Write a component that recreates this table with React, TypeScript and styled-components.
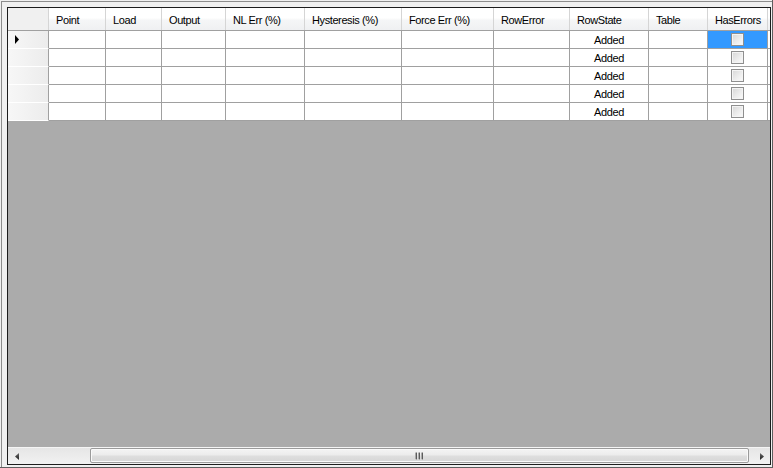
import React, { FC } from "react";
import styled, { createGlobalStyle } from "styled-components";

type Column = {
  title: string;
  width: number;
  align?: "left" | "center";
};

const columns: Column[] = [
  { title: "Point", width: 57 },
  { title: "Load", width: 56 },
  { title: "Output", width: 64 },
  { title: "NL Err (%)", width: 79 },
  { title: "Hysteresis (%)", width: 97 },
  { title: "Force Err (%)", width: 92 },
  { title: "RowError", width: 76 },
  { title: "RowState", width: 79, align: "center" },
  { title: "Table", width: 59 },
  { title: "HasErrors", width: 60, align: "center" },
  { title: "", width: 100 },
];

const ROW_HEADER_WIDTH = 41;
const template = [ROW_HEADER_WIDTH, ...columns.map((c) => c.width)]
  .map((w) => `${w}px`)
  .join(" ");

const rows = [0, 1, 2, 3, 4];

const GlobalStyle = createGlobalStyle`
  html, body {
    margin: 0;
    padding: 0;
    background: #f0f0f0;
    font-family: "Liberation Sans", Arial, sans-serif;
    font-size: 11px;
    color: #000;
  }
`;

const RowIndicator: FC = () => (
  <svg width="4" height="9" viewBox="0 0 4 9">
    <polygon points="0,0 4,4.5 0,9" fill="#000" />
  </svg>
);

const ScrollArrow: FC<{ dir: "left" | "right" }> = ({ dir }) => (
  <svg width="4" height="7" viewBox="0 0 4 7">
    <defs>
      <linearGradient id={`arr-${dir}`} x1="0" y1="0" x2="0" y2="1">
        <stop offset="0" stopColor="#6a6a6a" />
        <stop offset="1" stopColor="#1e1e1e" />
      </linearGradient>
    </defs>
    <polygon
      points={dir === "left" ? "4,0 0,3.5 4,7" : "0,0 4,3.5 0,7"}
      fill={`url(#arr-${dir})`}
    />
  </svg>
);

const Grip: FC = () => (
  <svg width="9" height="8" viewBox="0 0 9 8">
    {[0, 3, 6].map((x) => (
      <g key={x}>
        <rect x={x} y="0" width="2" height="8" fill="#f7f7f7" />
        <rect x={x + 0.5} y="0.5" width="1.5" height="7" fill="#5c5c5c" />
      </g>
    ))}
  </svg>
);

const App: FC = () => (
  <>
    <GlobalStyle />
    <Window>
      <Frame>
        <GridView>
          <HeaderRow $template={template}>
            <CornerCell />
            {columns.map((c, i) => (
              <HeaderCell key={i}>{c.title}</HeaderCell>
            ))}
          </HeaderRow>
          {rows.map((r) => (
            <DataRow key={r} $template={template}>
              <RowHeaderCell>{r === 0 && <RowIndicator />}</RowHeaderCell>
              {columns.map((c, i) => (
                <Cell
                  key={i}
                  $align={c.align ?? "left"}
                  $selected={r === 0 && c.title === "HasErrors"}
                >
                  {c.title === "RowState" && "Added"}
                  {c.title === "HasErrors" && <CheckBox />}
                </Cell>
              ))}
            </DataRow>
          ))}
          <Workspace />
          <ScrollBar>
            <ArrowButton>
              <ScrollArrow dir="left" />
            </ArrowButton>
            <Track>
              <Thumb $offset={65} $trailing={4}>
                <Grip />
              </Thumb>
            </Track>
            <ArrowButton>
              <ScrollArrow dir="right" />
            </ArrowButton>
          </ScrollBar>
        </GridView>
      </Frame>
    </Window>
  </>
);

export default App;

const Window = styled.div`
  width: 773px;
  height: 468px;
  box-sizing: border-box;
  display: flex;
  padding: 1px 0 0 1px;
  background: #f0f0f0;
  border-right: 1px solid #5f5f5f;
  border-bottom: 1px solid #5f5f5f;
`;

const Frame = styled.div`
  flex: 1;
  display: flex;
  min-width: 0;
  padding: 5px 1px 2px 5px;
  border-top: 1px solid #8c8c8c;
  border-left: 1px solid #8c8c8c;
`;

const GridView = styled.div`
  flex: 1;
  min-width: 0;
  display: flex;
  flex-direction: column;
  overflow: hidden;
  border: 1px solid #1c1c1c;
  background: #ababab;
`;

const HeaderRow = styled.div<{ $template: string }>`
  display: grid;
  grid-template-columns: ${(p) => p.$template};
  height: 23px;
  flex-shrink: 0;
  box-sizing: border-box;
  border-bottom: 1px solid #a0a0a0;
  background: linear-gradient(
    to bottom,
    #ffffff 0%,
    #ffffff 45%,
    #f5f6f7 55%,
    #eff0f2 100%
  );
`;

const CornerCell = styled.div`
  box-sizing: border-box;
  background: #f0f0f0;
  border-right: 1px solid #d5d5d5;
`;

const HeaderCell = styled.div`
  box-sizing: border-box;
  display: flex;
  align-items: center;
  padding: 1px 0 0 7px;
  white-space: nowrap;
  overflow: hidden;
  letter-spacing: -0.4px;
  border-right: 1px solid #d5d5d5;
`;

const DataRow = styled.div<{ $template: string }>`
  display: grid;
  grid-template-columns: ${(p) => p.$template};
  height: 18px;
  flex-shrink: 0;
`;

const RowHeaderCell = styled.div`
  box-sizing: border-box;
  display: flex;
  align-items: center;
  padding-left: 7px;
  background: linear-gradient(to right, #f7f7f7, #ececec);
  border-bottom: 1px solid #ffffff;
  border-right: 1px solid #a0a0a0;
`;

const Cell = styled.div<{ $align: "left" | "center"; $selected: boolean }>`
  box-sizing: border-box;
  display: flex;
  align-items: center;
  justify-content: ${(p) => (p.$align === "center" ? "center" : "flex-start")};
  padding: 1px 0 0;
  white-space: nowrap;
  overflow: hidden;
  letter-spacing: -0.4px;
  background: ${(p) => (p.$selected ? "#3399ff" : "#ffffff")};
  border-right: 1px solid #a0a0a0;
  border-bottom: 1px solid #a0a0a0;
`;

const CheckBox = styled.span`
  display: block;
  width: 13px;
  height: 13px;
  margin-top: -1px;
  box-sizing: border-box;
  border: 1px solid #8f8f8f;
  background: linear-gradient(135deg, #d6d6d6 0%, #eeeeee 60%, #fbfbfb 100%);
  box-shadow: inset 0 0 0 1px #f4f4f4;
`;

const Workspace = styled.div`
  flex: 1;
  background: #ababab;
`;

const ScrollBar = styled.div`
  display: flex;
  height: 17px;
  flex-shrink: 0;
  background: linear-gradient(to bottom, #e6e6e6, #f1f1f1);
  border-top: 1px solid #f5f5f5;
  box-sizing: border-box;
`;

const ArrowButton = styled.div`
  width: 17px;
  flex-shrink: 0;
  display: flex;
  align-items: center;
  justify-content: center;
`;

const Track = styled.div`
  flex: 1;
  display: flex;
  align-items: stretch;
`;

const Thumb = styled.div<{ $offset: number; $trailing: number }>`
  flex: 1;
  margin: 0 ${(p) => p.$trailing}px 1px ${(p) => p.$offset}px;
  display: flex;
  align-items: center;
  justify-content: center;
  box-sizing: border-box;
  border: 1px solid #9b9b9b;
  border-radius: 2px;
  background: linear-gradient(
    to bottom,
    #f4f4f4 0%,
    #ececec 45%,
    #dedede 55%,
    #d6d6d6 100%
  );
  box-shadow: inset 0 0 0 1px #fafafa;
`;
